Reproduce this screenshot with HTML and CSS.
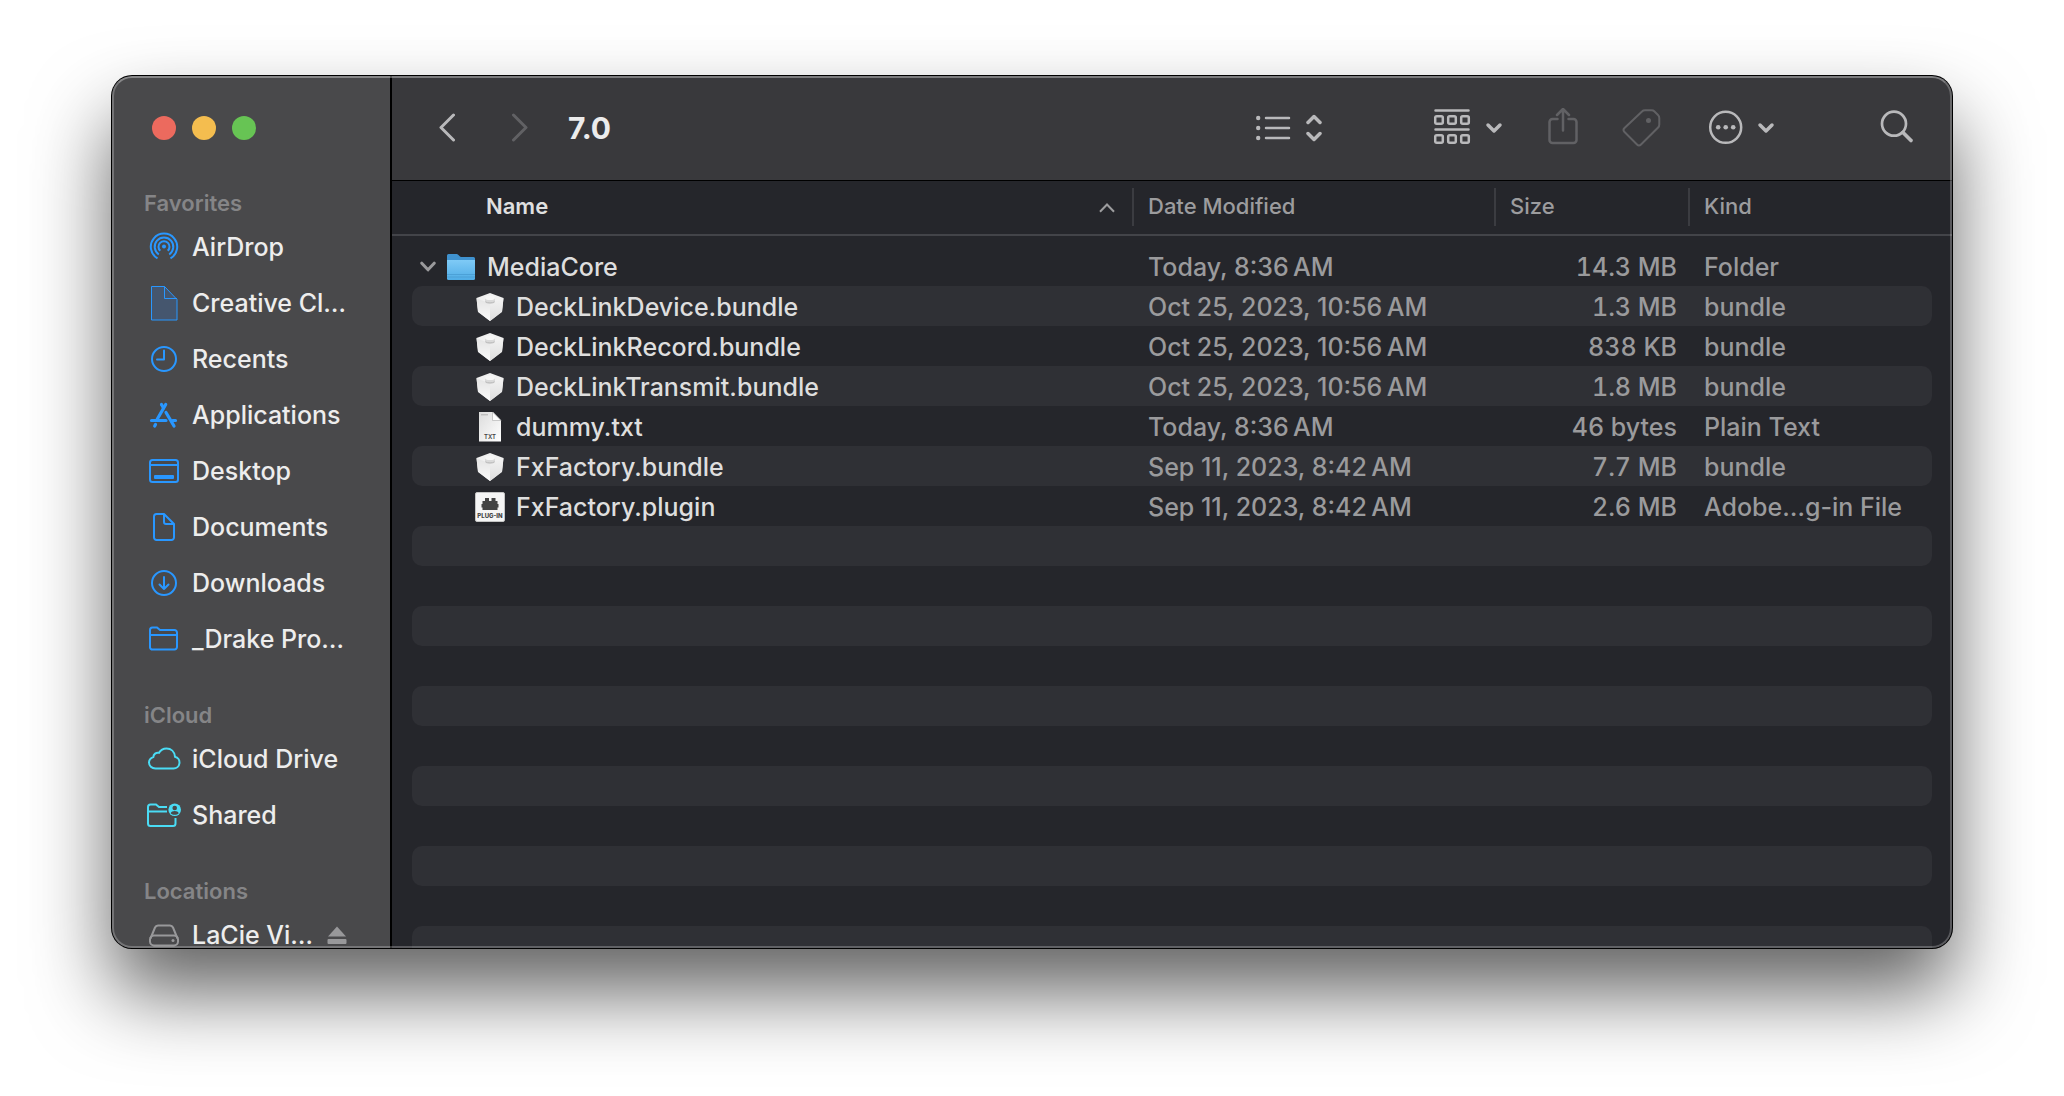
FILE: index.html
```html
<!DOCTYPE html>
<html lang="en">
<head>
<meta charset="utf-8">
<meta name="viewport" content="width=device-width, initial-scale=1">
<title>7.0</title>
<link rel="stylesheet" href="styles.css">
</head>
<body>
<svg class="defs" aria-hidden="true">
  <defs>
    <linearGradient id="folder-front" x1="0" y1="0" x2="0" y2="1"><stop offset="0" stop-color="#7fcaf6"/><stop offset="1" stop-color="#50ade6"/></linearGradient>
    <linearGradient id="cube-left" x1="0" y1="0" x2="0" y2="1"><stop offset="0" stop-color="#e4e4e4"/><stop offset="1" stop-color="#fafafa"/></linearGradient>
    <linearGradient id="cube-right" x1="0" y1="0" x2="0" y2="1"><stop offset="0" stop-color="#f2f2f2"/><stop offset="1" stop-color="#dedede"/></linearGradient>
    <linearGradient id="paper" x1="0" y1="0" x2="1" y2="1"><stop offset="0" stop-color="#dcdcdc"/><stop offset="1" stop-color="#ffffff"/></linearGradient>
    <symbol id="cube" viewBox="0 0 30 30">
      <path d="M15 1 28.500 6 27 19.500 15 29 3 19.500 1.500 6Z" fill="#f1f1f1"/>
      <path d="M1.500 6.200 15 11.500V29L3 20Z" fill="url(#cube-left)"/>
      <path d="M28.500 6.200 15 11.500V29L27 20Z" fill="url(#cube-right)"/>
      <path d="M10 5.500v4c0 1.300 2.200 2.300 5 2.300s5-1 5-2.300v-4Z" fill="#dadada"/>
      <ellipse cx="15" cy="5.800" rx="5" ry="2.300" fill="#f7f7f7"/>
      <path d="M10.500 9.800c1.500 1.500 7.500 1.500 9 0" fill="none" stroke="#b9b9b9"/>
    </symbol>
  </defs>
</svg>

<div class="window">
  <aside class="sidebar">
    <div class="lights">
      <button class="light light-close" aria-label="Close"></button>
      <button class="light light-minimize" aria-label="Minimize"></button>
      <button class="light light-zoom" aria-label="Zoom"></button>
    </div>
    <nav aria-label="Sidebar">
      <h2 class="group">Favorites</h2>
      <a class="place" href="#airdrop"><svg class="glyph" viewBox="0 0 36 36"><g fill="none" stroke-width="2"><path d="M11.500 29.300a13.200 13.200 0 1 1 13 0"/><path d="M12.800 25.500a9.300 9.300 0 1 1 10.400 0"/><path d="M14.300 21.800a5.500 5.500 0 1 1 7.400 0"/></g><circle class="solid" cx="18" cy="17.600" r="2"/></svg><span>AirDrop</span></a>
      <a class="place" href="#creative"><svg class="glyph" viewBox="0 0 36 36"><path d="M5.500 1.500h13l12.500 13v20.500H5.500Z" fill="#45566e" stroke-width="1"/><path d="M18.500 1.500v12h12.500" fill="none" stroke-width="1"/></svg><span>Creative Cl…</span></a>
      <a class="place" href="#recents"><svg class="glyph" viewBox="0 0 36 36"><g fill="none" stroke-width="2"><circle cx="18" cy="18" r="12"/><path d="M18 9.500V18.500H11" stroke-linecap="round" stroke-linejoin="round"/></g></svg><span>Recents</span></a>
      <a class="place" href="#applications"><svg class="glyph" viewBox="0 0 36 36"><g fill="none" stroke-width="3.200" stroke-linecap="round"><path d="M19.700 7.500 11.200 22.200"/><path d="M15.500 7.500 17.500 11"/><path d="M5.500 23.500h14.500M26.500 23.500h3"/><path d="M20 15.500 28 29"/><path d="M9.500 27.500 8.700 29"/></g></svg><span>Applications</span></a>
      <a class="place" href="#desktop"><svg class="glyph" viewBox="0 0 36 36"><g fill="none" stroke-width="2"><rect x="4" y="7" width="28" height="22" rx="2.500"/><path d="M4 12h28"/></g><rect class="solid" x="8" y="22" width="20" height="4" rx="1"/></svg><span>Desktop</span></a>
      <a class="place" href="#documents"><svg class="glyph" viewBox="0 0 36 36"><g fill="none" stroke-width="2" stroke-linejoin="round"><path d="M10.500 5H18l10 10v13.500a2.500 2.500 0 0 1-2.500 2.500h-15A2.500 2.500 0 0 1 8 28.500v-21A2.500 2.500 0 0 1 10.500 5Z"/><path d="M18 5v8a2 2 0 0 0 2 2h8"/></g></svg><span>Documents</span></a>
      <a class="place" href="#downloads"><svg class="glyph" viewBox="0 0 36 36"><g fill="none" stroke-width="2" stroke-linecap="round" stroke-linejoin="round"><circle cx="18" cy="18" r="12"/><path d="M18 12v12M13.500 19.500 18 24l4.500-4.500"/></g></svg><span>Downloads</span></a>
      <a class="place" href="#drake"><svg class="glyph" viewBox="0 0 36 36"><g fill="none" stroke-width="2"><path d="M4 26.500V9a2.500 2.500 0 0 1 2.500-2.500h4.500l3 2.500h14.500A2.500 2.500 0 0 1 31 11.500v14.500a2.500 2.500 0 0 1-2.500 2.500h-22A2.500 2.500 0 0 1 4 26.500Z"/><path d="M4 14h27"/></g></svg><span>_Drake Pro…</span></a>

      <h2 class="group">iCloud</h2>
      <a class="place cyan" href="#icloud"><svg class="glyph" viewBox="0 0 36 36"><path d="M9.500 27.500h18a6 6 0 0 0 1.500-11.800C28.500 10.500 25 7.500 20.500 7.500c-3.500 0-6 1.700-7.500 4.300-3-.6-5.500 1.300-5.700 4.300C4.700 17 3 19 3 21.500c0 3.300 2.700 6 6.500 6Z" fill="none" stroke-width="2"/></svg><span>iCloud Drive</span></a>
      <a class="place cyan" href="#shared"><svg class="glyph" viewBox="0 0 36 36"><path d="M21 10h-8l-3-2.500H4.500A2.500 2.500 0 0 0 2 10v16.500A2.500 2.500 0 0 0 4.500 29h22.500a2.500 2.500 0 0 0 2.500-2.500V21M2 14.500h19" fill="none" stroke-width="2"/><circle class="solid" cx="28.700" cy="12.700" r="6.300"/><g fill="#49494b"><circle cx="28.700" cy="11" r="2.300"/><path d="M24.700 16.300c.8-3 7.200-3 8 0-2 2-6 2-8 0Z"/></g></svg><span>Shared</span></a>

      <h2 class="group">Locations</h2>
      <div class="place gray"><svg class="glyph" viewBox="0 0 36 36"><g fill="none" stroke-width="2"><path d="M4.500 21.500 9 10.500A3.500 3.500 0 0 1 12 8.500h12a3.500 3.500 0 0 1 3 2l4.500 11"/><rect x="4" y="18.500" width="28" height="10" rx="4"/></g><circle class="solid" cx="27" cy="23.500" r="1.500"/></svg><a href="#lacie">LaCie Vi…</a>
        <button class="eject" aria-label="Eject LaCie"><svg viewBox="0 0 20 20"><path d="M10 1.500 19 11.500H1Z" stroke-width="1" stroke-linejoin="round"/><rect x=".5" y="14" width="19" height="5" rx="1"/></svg></button></div>
    </nav>
  </aside>

  <main class="content">
    <header class="toolbar">
      <button class="tool" aria-label="Back"><svg width="16" height="32" viewBox="0 0 16 32"><path d="M14.500 3 2 15.500l12.500 12.500" stroke-width="3"/></svg></button>
      <button class="tool forward dim" aria-label="Forward" disabled><svg width="16" height="32" viewBox="0 0 16 32"><path d="M1.500 3 14 15.500 1.500 28" stroke-width="3"/></svg></button>
      <h1 class="title">7.0</h1>
      <div class="tools">
        <button class="tool view" aria-label="View as list"><svg width="66" height="40" viewBox="0 0 66 40"><path d="M10 10h23M10 20h23M10 30h23" stroke-width="2.500"/><g class="solid"><circle cx="2.200" cy="10" r="2.200"/><circle cx="2.200" cy="20" r="2.200"/><circle cx="2.200" cy="30" r="2.200"/></g><path d="M52 14.500 58 8.500 64 14.500M52 25.500 58 31.500 64 25.500" stroke-width="3.500"/></svg></button>
        <button class="tool" aria-label="Group items"><svg width="70" height="40" viewBox="0 0 70 40"><path d="M1.500 2.500h33M1.500 21.500h33" stroke-width="2.500"/><g stroke-width="2.500"><rect x="1.200" y="8.200" width="7.600" height="7.600" rx="1.500"/><rect x="14.200" y="8.200" width="7.600" height="7.600" rx="1.500"/><rect x="27.200" y="8.200" width="7.600" height="7.600" rx="1.500"/><rect x="1.200" y="27.200" width="7.600" height="7.600" rx="1.500"/><rect x="14.200" y="27.200" width="7.600" height="7.600" rx="1.500"/><rect x="27.200" y="27.200" width="7.600" height="7.600" rx="1.500"/></g><path d="M54 17 60 23 66 17" stroke-width="3.500"/></svg></button>
        <button class="tool dim" aria-label="Share" disabled><svg width="30" height="40" viewBox="0 0 30 40"><path d="M9.500 11H4.500a3 3 0 0 0-3 3v18a3 3 0 0 0 3 3h21a3 3 0 0 0 3-3V14a3 3 0 0 0-3-3h-5M15 22.500V1.500M9 7 15 1 21 7" stroke-width="2.500"/></svg></button>
        <button class="tool dim" aria-label="Edit tags" disabled><svg width="40" height="40" viewBox="0 0 40 40"><path d="M20 3.500q1.200-1.200 3-1.200h6.500q1.800 0 3 1.200l3.500 3.500q1.300 1.300 1.300 3v6.500q0 1.800-1.200 3L19 36.500q-2 2-4 0L2.500 24q-2-2 0-4Z" stroke-width="2"/><circle class="solid" cx="26.500" cy="12.500" r="2.500"/></svg></button>
        <button class="tool" aria-label="More actions"><svg width="70" height="40" viewBox="0 0 70 40"><circle cx="19.700" cy="19.300" r="15.500" stroke-width="2.500"/><g class="solid"><circle cx="12.200" cy="19.300" r="2.300"/><circle cx="19.700" cy="19.300" r="2.300"/><circle cx="27.200" cy="19.300" r="2.300"/></g><path d="M54 17 60 23 66 17" stroke-width="3.500"/></svg></button>
        <button class="tool search" aria-label="Search"><svg width="34" height="40" viewBox="0 0 34 40"><circle cx="14" cy="15.700" r="12" stroke-width="2.700"/><path d="M23 24.500 31 32.500" stroke-width="3.700"/></svg></button>
      </div>
    </header>

    <table class="files">
      <thead>
        <tr>
          <th aria-sort="ascending"><button class="sort sorted">Name<svg width="16" height="14" viewBox="0 0 16 14"><path d="M1 12.800 8 5.500 15 12.800"/></svg></button></th>
          <th><button class="sort">Date Modified</button></th>
          <th><button class="sort">Size</button></th>
          <th><button class="sort">Kind</button></th>
        </tr>
      </thead>
      <tbody>
        <tr>
          <td class="name top"><button class="disclosure" aria-label="Collapse MediaCore"><svg width="16" height="12" viewBox="0 0 16 12"><path d="M1.800 2.200 8 8.800 14.200 2.200"/></svg></button><svg class="folder" width="28" height="28" viewBox="0 0 28 28"><path d="M0 2.500Q0 1 1.500 1h8q1 0 2 1l1.500 1.500q.8.500 2 .5h11.500Q28 4 28 5.500V10H0Z" fill="#3f92cf"/><path d="M0 7h28v18.500q0 1.500-1.500 1.500h-25Q0 27 0 25.500Z" fill="url(#folder-front)"/><path d="M0 21.500h28M0 24h28" stroke="#4598cf" stroke-width=".7"/></svg><span>MediaCore</span></td>
          <td>Today, 8:36&#8239;AM</td><td class="size">14.3 MB</td><td>Folder</td>
        </tr>
        <tr>
          <td class="name"><svg class="file" viewBox="0 0 30 30"><use href="#cube"/></svg><span>DeckLinkDevice.bundle</span></td>
          <td>Oct 25, 2023, 10:56&#8239;AM</td><td class="size">1.3 MB</td><td>bundle</td>
        </tr>
        <tr>
          <td class="name"><svg class="file" viewBox="0 0 30 30"><use href="#cube"/></svg><span>DeckLinkRecord.bundle</span></td>
          <td>Oct 25, 2023, 10:56&#8239;AM</td><td class="size">838 KB</td><td>bundle</td>
        </tr>
        <tr>
          <td class="name"><svg class="file" viewBox="0 0 30 30"><use href="#cube"/></svg><span>DeckLinkTransmit.bundle</span></td>
          <td>Oct 25, 2023, 10:56&#8239;AM</td><td class="size">1.8 MB</td><td>bundle</td>
        </tr>
        <tr>
          <td class="name"><svg class="file" viewBox="0 0 30 30"><path d="M4 0h14l8 8.500V29.500H4Z" fill="url(#paper)"/><path d="M17.500 0v8.500H26Z" fill="#fff" stroke="#b5b5b5" stroke-width=".7"/><path d="M6 2.800h7" stroke="#b0b0b0"/><text class="tag-text" x="15" y="26.500" font-size="6">TXT</text></svg><span>dummy.txt</span></td>
          <td>Today, 8:36&#8239;AM</td><td class="size">46 bytes</td><td>Plain Text</td>
        </tr>
        <tr>
          <td class="name"><svg class="file" viewBox="0 0 30 30"><use href="#cube"/></svg><span>FxFactory.bundle</span></td>
          <td>Sep 11, 2023, 8:42&#8239;AM</td><td class="size">7.7 MB</td><td>bundle</td>
        </tr>
        <tr>
          <td class="name"><svg class="file" viewBox="0 0 30 30"><rect x=".5" y=".5" width="29" height="29" rx="1.500" fill="#f5f5f5" stroke="#c4c4c4"/><path d="M10 6h4v3h2.500V6h4v3H22.500v3h1v3.500h-1V18H7.500v-2.500h-1V12h1V9H10Z" fill="#444"/><text class="tag-text plug" x="15" y="25.500" font-size="6">PLUG-IN</text></svg><span>FxFactory.plugin</span></td>
          <td>Sep 11, 2023, 8:42&#8239;AM</td><td class="size">2.6 MB</td><td>Adobe…g-in File</td>
        </tr>
      </tbody>
      <tbody class="blank" aria-hidden="true">
        <tr></tr><tr></tr><tr></tr><tr></tr><tr></tr><tr></tr><tr></tr><tr></tr><tr></tr><tr></tr><tr></tr>
      </tbody>
    </table>
  </main>
</div>
</body>
</html>
```

FILE: styles.css
```css
:root {
  --blue: #2997ff;
  --cyan: #4adcf5;
  --tool: #b9b9bb;
  --columns: minmax(0, 1fr) 362px 194px 244px;
}

* {
  box-sizing: border-box;
}

body {
  display: flex;
  height: 100vh;
  margin: 0;
  padding: 76px 112px 148px;
  overflow: hidden;
  background: #fff;
  font-family: Inter, "Liberation Sans", sans-serif;
  font-size: 25px;
  font-weight: 500;
}

button {
  margin: 0;
  padding: 0;
  border: 0;
  background: none;
  color: inherit;
  font: inherit;
}

svg {
  display: block;
  flex: none;
}

.defs {
  position: absolute;
  width: 0;
  height: 0;
}

.window {
  position: relative;
  display: flex;
  flex: 1;
  min-width: 0;
  overflow: hidden;
  border-radius: 20px;
  background: #25262b;
  box-shadow: 0 0 0 1px #000, 0 44px 80px rgba(0, 0, 0, 0.62);
}

/* light rim drawn over both panes */
.window::after {
  content: "";
  position: absolute;
  inset: 0;
  border: 2px solid rgba(255, 255, 255, 0.24);
  border-top-color: rgba(255, 255, 255, 0.34);
  border-radius: 20px;
  pointer-events: none;
}

/* Sidebar */

.sidebar {
  flex: none;
  width: 280px;
  overflow: hidden;
  border-right: 2px solid #000;
  background: #49494b;
}

.lights {
  display: flex;
  gap: 16px;
  padding: 40px 40px 15px;
}

.light {
  width: 24px;
  height: 24px;
  border-radius: 50%;
}

.light-close {
  background: #ec6a5e;
}

.light-minimize {
  background: #f4bd4f;
}

.light-zoom {
  background: #67c454;
}

.group {
  margin: 0;
  padding: 33px 32px 1px;
  color: #858587;
  font-size: 22px;
  font-weight: 600;
  line-height: 30px;
}

.place {
  display: flex;
  align-items: center;
  gap: 10px;
  height: 56px;
  padding: 0 43px 0 34px;
  color: #ededed;
  text-decoration: none;
  white-space: nowrap;
}

.place a {
  color: inherit;
  text-decoration: none;
}

.glyph {
  width: 36px;
  height: 36px;
  stroke: var(--blue);
}

.glyph .solid {
  fill: var(--blue);
  stroke: none;
}

.cyan .glyph {
  stroke: var(--cyan);
}

.cyan .solid {
  fill: var(--cyan);
}

.cyan .glyph g {
  stroke: none;
}

.gray .glyph {
  stroke: #98989a;
}

.gray .solid {
  fill: #98989a;
}

.eject {
  margin-left: auto;
}

.eject svg {
  width: 20px;
  height: 20px;
  fill: #98989a;
}

/* Toolbar */

.content {
  flex: 1;
  min-width: 0;
  overflow: hidden;
}

.toolbar {
  display: flex;
  align-items: center;
  height: 105px;
  padding: 0 38px 0 47px;
  border-bottom: 1px solid #000;
  background: #39393c;
}

.tool svg {
  fill: none;
  stroke: var(--tool);
  stroke-linecap: round;
  stroke-linejoin: round;
}

.tool .solid {
  fill: var(--tool);
  stroke: none;
}

.tool.dim svg {
  stroke: #616164;
}

.tool.dim .solid {
  fill: #616164;
}

.forward {
  margin-left: 57px;
}

.title {
  margin: 0 0 0 40px;
  color: #ececec;
  font-size: 30px;
  font-weight: 700;
}

.tools {
  display: flex;
  gap: 44px;
  margin-left: auto;
}

.view {
  margin-right: 68px;
}

.search {
  margin-left: 60px;
}

/* File list */

.files,
.files thead,
.files tbody {
  display: block;
}

.files tr {
  display: grid;
  grid-template-columns: var(--columns);
}

.files thead tr {
  padding: 7px 20px 8px;
  border-bottom: 2px solid #434449;
}

.files th {
  height: 38px;
  padding: 0;
  border-left: 2px solid #3b3c41;
  color: #9c9c9e;
}

.files th:first-child {
  border-left-color: transparent;
}

.sort {
  display: flex;
  align-items: center;
  justify-content: space-between;
  width: 100%;
  height: 100%;
  padding: 0 17px 2px 14px;
  font-size: 22px;
  font-weight: 500;
}

.sorted {
  padding-left: 72px;
  color: #e0e0e0;
  font-weight: 600;
}

.sorted svg {
  fill: none;
  stroke: #9c9c9e;
  stroke-width: 2;
}

.files tbody {
  padding: 10px 20px 0;
}

.files .blank {
  padding-top: 0;
}

.files tbody tr {
  height: 40px;
  border-radius: 10px;
}

.files tbody tr:nth-child(even),
.blank tr:nth-child(odd) {
  background: #2f3035;
}

.files .blank tr:nth-child(even) {
  background: none;
}

.files td {
  padding: 1px 11px 0 16px;
  color: #9a9a9c;
  line-height: 40px;
  white-space: nowrap;
}

.files .size {
  text-align: right;
  font-variant-numeric: tabular-nums;
}

.files .name {
  display: flex;
  align-items: center;
  gap: 11px;
  padding-left: 63px;
  color: #dedede;
}

.files .top {
  padding-left: 8px;
}

.files .folder {
  margin-right: 1px;
}

.disclosure svg {
  fill: none;
  stroke: #9a9a9c;
  stroke-width: 3;
  stroke-linecap: round;
  stroke-linejoin: round;
}

.file {
  width: 30px;
  height: 30px;
}

.tag-text {
  fill: #444;
  font-weight: 600;
  text-anchor: middle;
}

.plug {
  font-weight: 800;
}
```
